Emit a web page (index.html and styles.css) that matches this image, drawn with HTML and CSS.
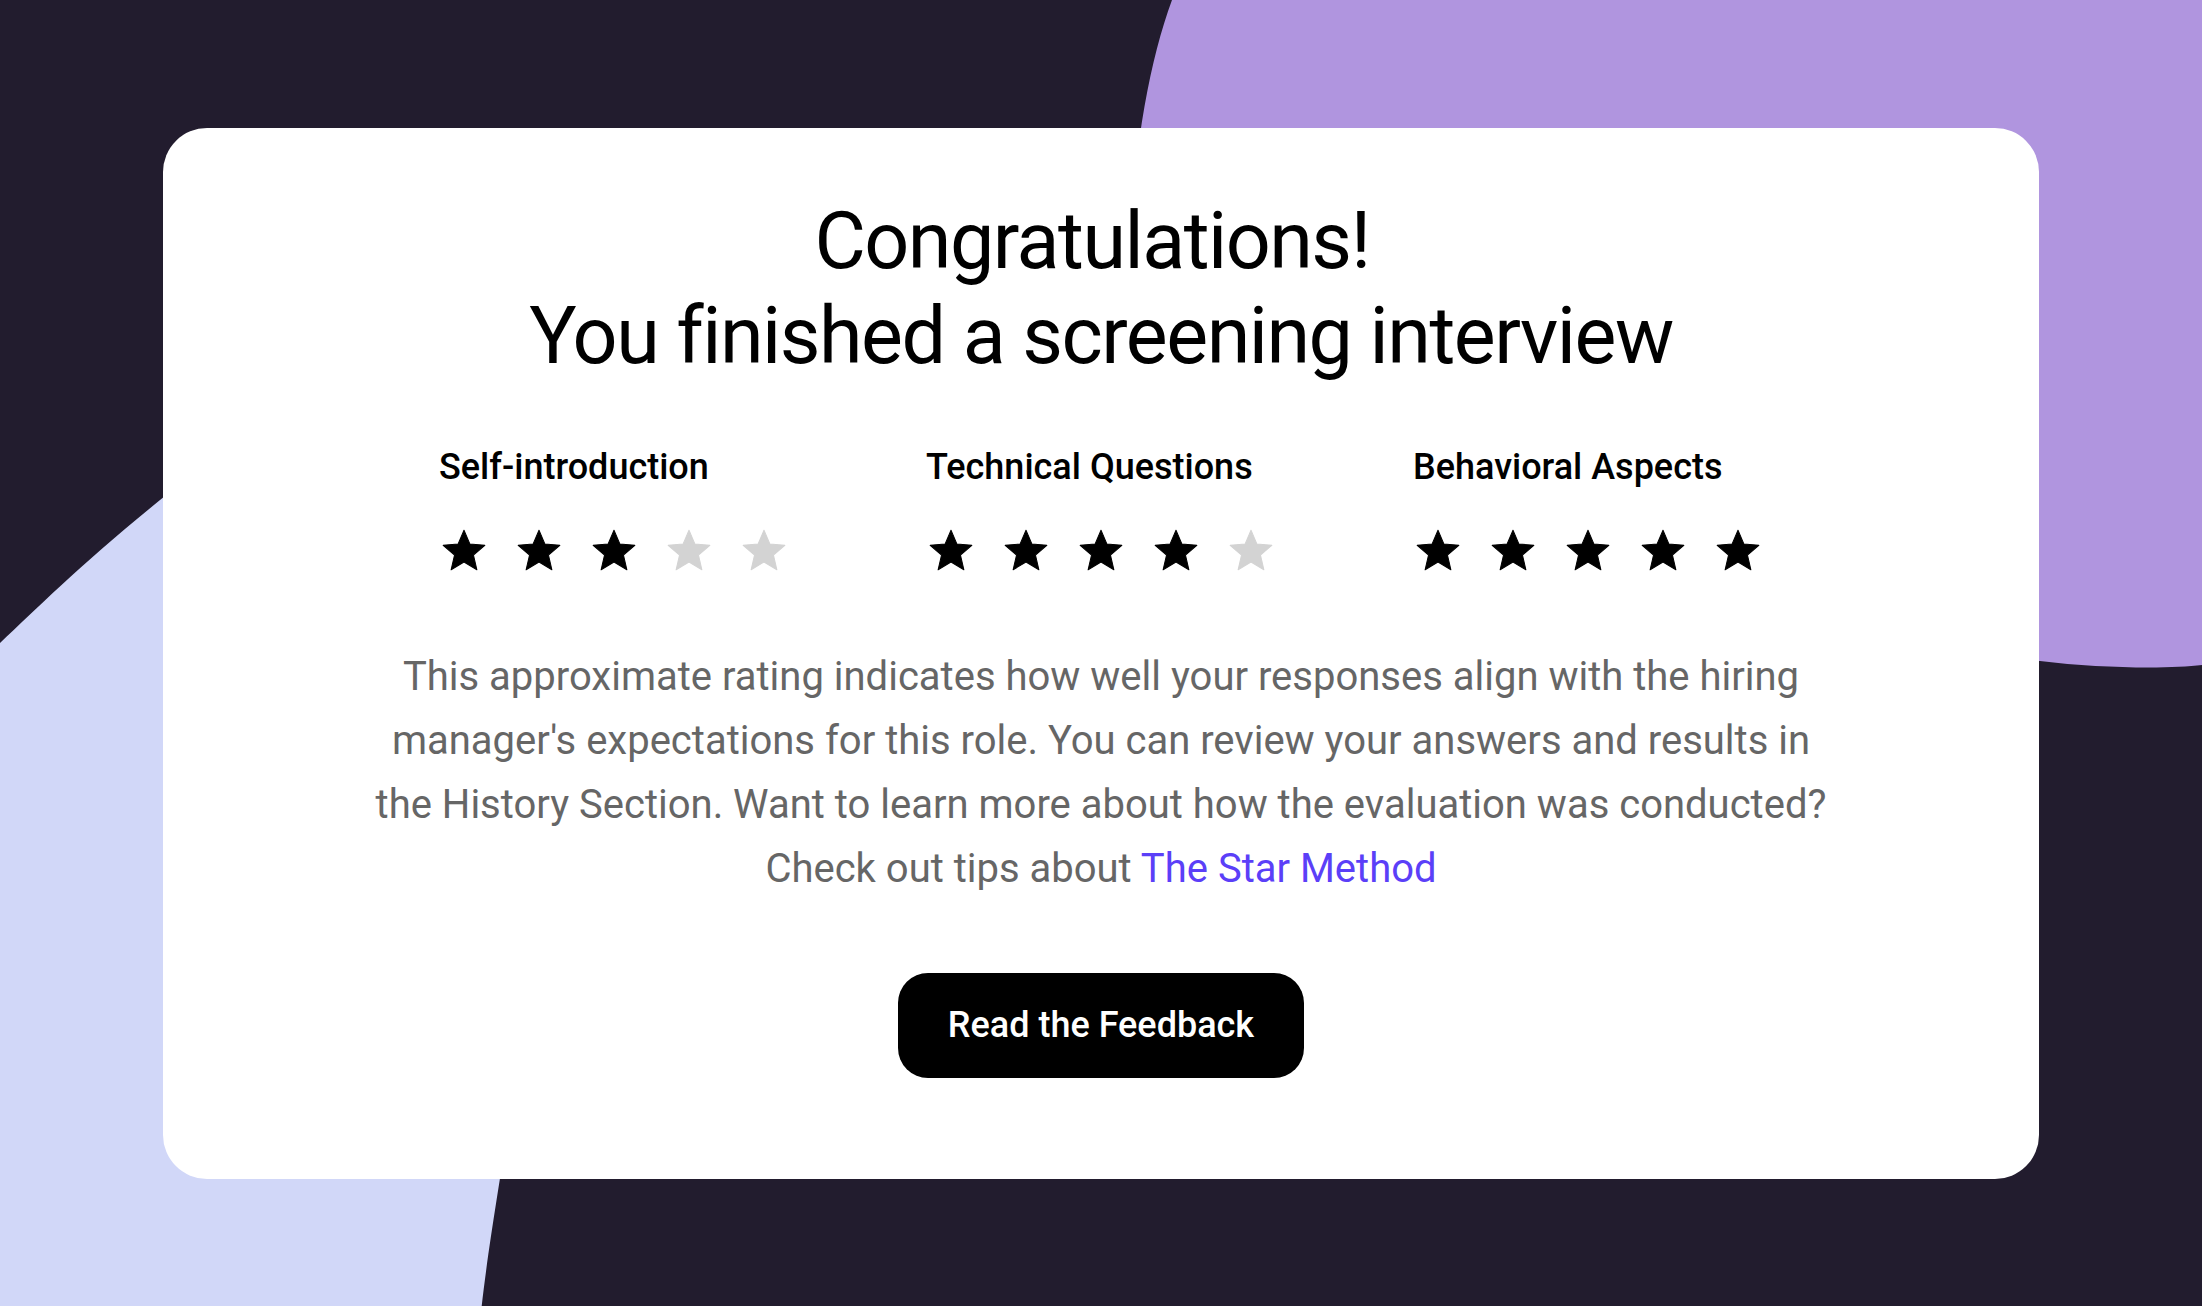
FILE: index.html
```html
<!DOCTYPE html>
<html lang="en">
<head>
<meta charset="utf-8">
<title>Interview finished</title>
<link rel="stylesheet" href="styles.css">
</head>
<body>
<svg class="backdrop" viewBox="0 0 2202 1306" preserveAspectRatio="none" aria-hidden="true">
  <path class="blob-purple" d="M1172 0 C1150 60 1135 140 1128 260 L1600 640 L2040 661 C2100 668.5 2170 669 2202 665 L2202 0 Z"/>
  <path class="blob-lavender" d="M0 643 C50 596 110 535 250 430 L520 1000 L506 1140 C500 1180 488 1250 481.7 1306 L0 1306 Z"/>
</svg>
<main class="card">
  <h1 class="title">Congratulations!&nbsp;<br>You finished a screening interview</h1>
  <section class="ratings">
    <div class="rating">
      <div class="rating-label">Self-introduction</div>
      <div class="stars">
        <svg class="star on" viewBox="0 0 24 24"><path d="M12 17.27L18.18 21l-1.64-7.03L22 9.24l-7.19-.61L12 2 9.19 8.63 2 9.24l5.46 4.73L5.82 21z"/></svg>
        <svg class="star on" viewBox="0 0 24 24"><path d="M12 17.27L18.18 21l-1.64-7.03L22 9.24l-7.19-.61L12 2 9.19 8.63 2 9.24l5.46 4.73L5.82 21z"/></svg>
        <svg class="star on" viewBox="0 0 24 24"><path d="M12 17.27L18.18 21l-1.64-7.03L22 9.24l-7.19-.61L12 2 9.19 8.63 2 9.24l5.46 4.73L5.82 21z"/></svg>
        <svg class="star off" viewBox="0 0 24 24"><path d="M12 17.27L18.18 21l-1.64-7.03L22 9.24l-7.19-.61L12 2 9.19 8.63 2 9.24l5.46 4.73L5.82 21z"/></svg>
        <svg class="star off" viewBox="0 0 24 24"><path d="M12 17.27L18.18 21l-1.64-7.03L22 9.24l-7.19-.61L12 2 9.19 8.63 2 9.24l5.46 4.73L5.82 21z"/></svg>
      </div>
    </div>
    <div class="rating">
      <div class="rating-label">Technical Questions</div>
      <div class="stars">
        <svg class="star on" viewBox="0 0 24 24"><path d="M12 17.27L18.18 21l-1.64-7.03L22 9.24l-7.19-.61L12 2 9.19 8.63 2 9.24l5.46 4.73L5.82 21z"/></svg>
        <svg class="star on" viewBox="0 0 24 24"><path d="M12 17.27L18.18 21l-1.64-7.03L22 9.24l-7.19-.61L12 2 9.19 8.63 2 9.24l5.46 4.73L5.82 21z"/></svg>
        <svg class="star on" viewBox="0 0 24 24"><path d="M12 17.27L18.18 21l-1.64-7.03L22 9.24l-7.19-.61L12 2 9.19 8.63 2 9.24l5.46 4.73L5.82 21z"/></svg>
        <svg class="star on" viewBox="0 0 24 24"><path d="M12 17.27L18.18 21l-1.64-7.03L22 9.24l-7.19-.61L12 2 9.19 8.63 2 9.24l5.46 4.73L5.82 21z"/></svg>
        <svg class="star off" viewBox="0 0 24 24"><path d="M12 17.27L18.18 21l-1.64-7.03L22 9.24l-7.19-.61L12 2 9.19 8.63 2 9.24l5.46 4.73L5.82 21z"/></svg>
      </div>
    </div>
    <div class="rating">
      <div class="rating-label">Behavioral Aspects</div>
      <div class="stars">
        <svg class="star on" viewBox="0 0 24 24"><path d="M12 17.27L18.18 21l-1.64-7.03L22 9.24l-7.19-.61L12 2 9.19 8.63 2 9.24l5.46 4.73L5.82 21z"/></svg>
        <svg class="star on" viewBox="0 0 24 24"><path d="M12 17.27L18.18 21l-1.64-7.03L22 9.24l-7.19-.61L12 2 9.19 8.63 2 9.24l5.46 4.73L5.82 21z"/></svg>
        <svg class="star on" viewBox="0 0 24 24"><path d="M12 17.27L18.18 21l-1.64-7.03L22 9.24l-7.19-.61L12 2 9.19 8.63 2 9.24l5.46 4.73L5.82 21z"/></svg>
        <svg class="star on" viewBox="0 0 24 24"><path d="M12 17.27L18.18 21l-1.64-7.03L22 9.24l-7.19-.61L12 2 9.19 8.63 2 9.24l5.46 4.73L5.82 21z"/></svg>
        <svg class="star on" viewBox="0 0 24 24"><path d="M12 17.27L18.18 21l-1.64-7.03L22 9.24l-7.19-.61L12 2 9.19 8.63 2 9.24l5.46 4.73L5.82 21z"/></svg>
      </div>
    </div>
  </section>
  <p class="note">This approximate rating indicates how well your responses align with the hiring manager's expectations for this role. You can review your answers and results in the History Section. Want to learn more about how the evaluation was conducted? Check out tips about <a class="link" href="#">The Star Method</a></p>
  <button class="cta" type="button">Read the Feedback</button>
</main>
</body>
</html>
```

FILE: styles.css
```css
html, body {
  margin: 0;
  padding: 0;
}

body {
  width: 100vw;
  height: 100vh;
  overflow: hidden;
  background: #221c2e;
  font-family: Roboto, "Noto Sans", "Liberation Sans", sans-serif;
  display: flex;
  align-items: center;
  justify-content: center;
  position: relative;
}

.backdrop {
  position: absolute;
  left: 0;
  top: 0;
  width: 100%;
  height: 100%;
  z-index: 0;
}

.blob-purple {
  fill: #b095df;
}

.blob-lavender {
  fill: #d1d7f8;
}

.card {
  position: relative;
  z-index: 1;
  box-sizing: border-box;
  width: 1876px;
  height: 1051px;
  background: #ffffff;
  border-radius: 44px;
  padding: 66px 100px 0;
  display: flex;
  flex-direction: column;
  align-items: center;
}

.title {
  margin: 0;
  font-size: 79px;
  line-height: 95px;
  font-weight: 400;
  color: #000000;
  text-align: center;
  letter-spacing: -1.5px;
}

.ratings {
  margin-top: 62px;
  display: flex;
  justify-content: center;
  gap: 137px;
}

.rating {
  display: flex;
  flex-direction: column;
  align-items: flex-start;
}

.rating-label {
  font-size: 36px;
  line-height: 42px;
  font-weight: 500;
  color: #000000;
}

.stars {
  margin-top: 38px;
  display: flex;
  gap: 25px;
}

.star {
  width: 50px;
  height: 50px;
  display: block;
}

.star path {
  stroke-width: 0.5;
  stroke-linejoin: round;
}

.star.on path {
  fill: #000000;
  stroke: #000000;
}

.star.off path {
  fill: #d3d3d3;
  stroke: #d3d3d3;
}

.note {
  margin: 69px 0 0;
  max-width: 1480px;
  font-size: 40px;
  line-height: 64px;
  color: #666666;
  text-align: center;
}

.link {
  color: #5b3ff8;
  text-decoration: none;
}

.cta {
  margin-top: 72px;
  height: 105px;
  padding: 0 50px;
  border: none;
  border-radius: 30px;
  background: #000000;
  color: #ffffff;
  font-family: Roboto, "Noto Sans", "Liberation Sans", sans-serif;
  font-size: 36px;
  font-weight: 500;
  cursor: pointer;
}
```
